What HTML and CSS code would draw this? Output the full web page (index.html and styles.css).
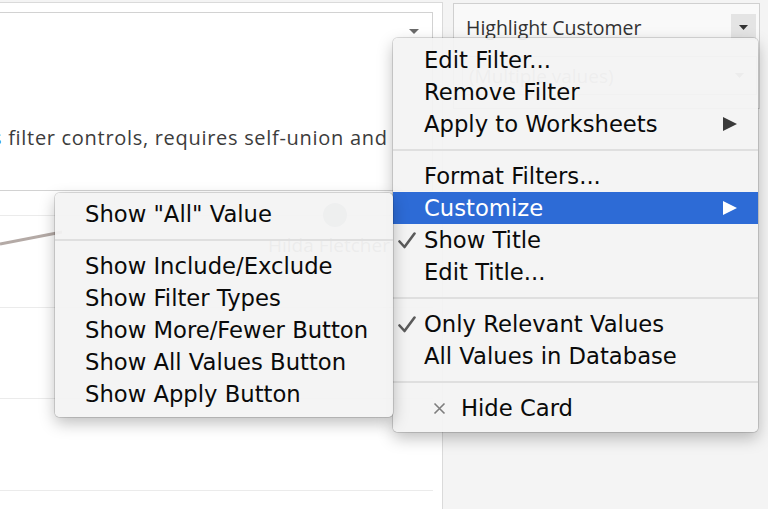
FILE: index.html
```html
<!DOCTYPE html>
<html>
<head>
<meta charset="utf-8">
<link rel="stylesheet" href="styles.css">
</head>
<body>
<div class="page">
  <section class="left">
    <div class="filter-card">
      <div class="card-head"><span class="caret"></span></div>
      <p class="desc"><span class="link">s</span> filter controls, requires self-union and</p>
    </div>
    <div class="chart">
      <div class="grid-row"></div>
      <div class="grid-row"></div>
      <div class="grid-row"></div>
      <div class="grid-row last"></div>
      <svg class="trend" width="120" height="40" viewBox="0 0 120 40"><path d="M0 15 L62 3" stroke="#b4aaa6" stroke-width="3" fill="none"/></svg>
      <div class="point"></div>
      <div class="point-label">Hilda Fletcher</div>
    </div>
  </section>
  <aside class="right">
    <div class="param-card">
      <div class="param-title">
        <span class="param-name">Highlight Customer</span>
        <span class="dd-btn"><svg width="9" height="5" viewBox="0 0 9 5"><path d="M0 0 H9 L4.5 5 Z" fill="#333"/></svg></span>
      </div>
      <div class="param-select">
        <span>(Multiple values)</span>
        <svg class="sel-caret" width="9" height="5" viewBox="0 0 9 5"><path d="M0 0 H9 L4.5 5 Z" fill="#888"/></svg>
      </div>
    </div>
  </aside>
</div>

<div class="menu main-menu">
  <div class="item"><span class="gutter"></span><span class="label">Edit Filter...</span></div>
  <div class="item"><span class="gutter"></span><span class="label">Remove Filter</span></div>
  <div class="item"><span class="gutter"></span><span class="label">Apply to Worksheets</span>
    <svg class="arrow" width="14" height="14" viewBox="0 0 14 14"><path d="M0 0 L14 7 L0 14 Z" fill="#3a3a3a"/></svg></div>
  <div class="sep"></div>
  <div class="item"><span class="gutter"></span><span class="label">Format Filters...</span></div>
  <div class="item active"><span class="gutter"></span><span class="label">Customize</span>
    <svg class="arrow" width="14" height="14" viewBox="0 0 14 14"><path d="M0 0 L14 7 L0 14 Z" fill="#fff"/></svg></div>
  <div class="item"><span class="gutter"><svg class="check" width="18" height="17" viewBox="0 0 18 17"><path d="M1.5 9.5 L6.5 15 L16.5 1.5" stroke="#5b5b5b" stroke-width="2.6" fill="none" stroke-linecap="round" stroke-linejoin="round"/></svg></span><span class="label">Show Title</span></div>
  <div class="item"><span class="gutter"></span><span class="label">Edit Title...</span></div>
  <div class="sep"></div>
  <div class="item"><span class="gutter"><svg class="check" width="18" height="17" viewBox="0 0 18 17"><path d="M1.5 9.5 L6.5 15 L16.5 1.5" stroke="#5b5b5b" stroke-width="2.6" fill="none" stroke-linecap="round" stroke-linejoin="round"/></svg></span><span class="label">Only Relevant Values</span></div>
  <div class="item"><span class="gutter"></span><span class="label">All Values in Database</span></div>
  <div class="sep"></div>
  <div class="item"><span class="gutter"></span><span class="x-icon"><svg width="13" height="13" viewBox="0 0 13 13"><path d="M1.5 1.5 L11.5 11.5 M11.5 1.5 L1.5 11.5" stroke="#7d7d7d" stroke-width="1.6"/></svg></span><span class="label">Hide Card</span></div>
</div>

<div class="menu sub-menu">
  <div class="item"><span class="gutter"></span><span class="label">Show "All" Value</span></div>
  <div class="sep"></div>
  <div class="item"><span class="gutter"></span><span class="label">Show Include/Exclude</span></div>
  <div class="item"><span class="gutter"></span><span class="label">Show Filter Types</span></div>
  <div class="item"><span class="gutter"></span><span class="label">Show More/Fewer Button</span></div>
  <div class="item"><span class="gutter"></span><span class="label">Show All Values Button</span></div>
  <div class="item"><span class="gutter"></span><span class="label">Show Apply Button</span></div>
</div>
</body>
</html>
```

FILE: styles.css
```css
html, body {
  margin: 0;
  padding: 0;
}
body {
  width: 768px;
  height: 509px;
  overflow: hidden;
  position: relative;
  background: #f4f4f4;
  font-family: "DejaVu Sans", "Liberation Sans", sans-serif;
}
.page {
  display: flex;
  height: 509px;
  padding-top: 2px;
  box-sizing: border-box;
  overflow: hidden;
}
.left {
  width: 443px;
  flex: none;
  background: #fff;
  border-top: 1px solid #dadada;
  border-right: 1px solid #dadada;
  box-sizing: border-box;
  padding-top: 9px;
  overflow: hidden;
}
.filter-card {
  width: 433px;
  height: 179px;
  border: 1px solid #d2d2d2;
  border-left: none;
  box-sizing: border-box;
  overflow: hidden;
}
.card-head {
  display: flex;
  justify-content: flex-end;
  padding: 16px 13px 0 0;
}
.caret {
  width: 0;
  height: 0;
  border-left: 5px solid transparent;
  border-right: 5px solid transparent;
  border-top: 5px solid #6a6a6a;
}
.desc {
  margin: 91px 0 0 0;
  font-family: "Open Sans", sans-serif;
  font-size: 20px;
  letter-spacing: 0.7px;
  line-height: 26px;
  color: #3c3c3c;
  white-space: nowrap;
}
.link {
  color: #2a7ad2;
  margin-left: -8px;
}
.chart {
  position: relative;
  padding-top: 24px;
  width: 433px;
}
.grid-row {
  height: 91.5px;
  border-top: 1px solid #ebebeb;
  box-sizing: border-box;
}
.grid-row.last {
  height: 20px;
}
.trend {
  position: absolute;
  left: 0;
  top: 38px;
}
.point {
  position: absolute;
  left: 323px;
  top: 12px;
  width: 24px;
  height: 24px;
  border-radius: 50%;
  background: #aab2ba;
}
.point-label {
  position: absolute;
  left: 268px;
  top: 42px;
  font-family: "Open Sans", sans-serif;
  font-size: 19px;
  line-height: 24px;
  color: #8a8a8a;
}
.right {
  flex: 1;
  padding: 1px 8px 0 10px;
}
.param-card {
  height: 106px;
  border: 1px solid #d0d0d0;
  background: #f9f9f9;
  box-sizing: border-box;
}
.param-title {
  display: flex;
  align-items: center;
  height: 26px;
  margin-top: 10px;
  padding-left: 12px;
}
.param-name {
  font-family: "Open Sans", sans-serif;
  font-size: 19.5px;
  color: #333;
}
.dd-btn {
  margin-left: auto;
  margin-right: 3px;
  width: 25px;
  height: 26px;
  background: #e4e4e4;
  display: flex;
  align-items: center;
  justify-content: center;
}
.param-select {
  margin: 16px 2px 0 8px;
  height: 39px;
  border: 1px solid #d6d6d6;
  background: #fff;
  box-sizing: border-box;
  display: flex;
  align-items: center;
  padding: 0 12px 0 6px;
  font-family: "Open Sans", sans-serif;
  font-size: 19px;
  color: #a5a5a5;
}
.sel-caret {
  margin-left: auto;
}
.menu {
  position: absolute;
  background: rgba(243, 243, 243, 0.93);
  border-radius: 5px;
  box-shadow: 0 0 0 1px rgba(0, 0, 0, 0.13), 0 6px 16px rgba(0, 0, 0, 0.26);
  color: #0a0a0a;
  font-size: 22.7px;
}
.main-menu {
  left: 393px;
  top: 38px;
  width: 365px;
  padding: 6px 0 8px;
}
.sub-menu {
  left: 55px;
  top: 193px;
  width: 338px;
  padding: 5px 0 7px;
}
.item {
  height: 32px;
  display: flex;
  align-items: center;
  white-space: nowrap;
}
.sub-menu .gutter {
  width: 30px;
}
.gutter {
  width: 31px;
  flex: none;
  display: flex;
  align-items: center;
}
.check {
  margin-left: 5px;
}
.x-icon {
  width: 37px;
  flex: none;
  display: flex;
  align-items: center;
  padding-left: 9px;
  box-sizing: border-box;
}
.arrow {
  margin-left: auto;
  margin-right: 21px;
}
.item.active {
  background: #2d6bd6;
  color: #fff;
}
.sep {
  height: 2px;
  margin: 9px 0;
  background: #dfdfdf;
}
```
